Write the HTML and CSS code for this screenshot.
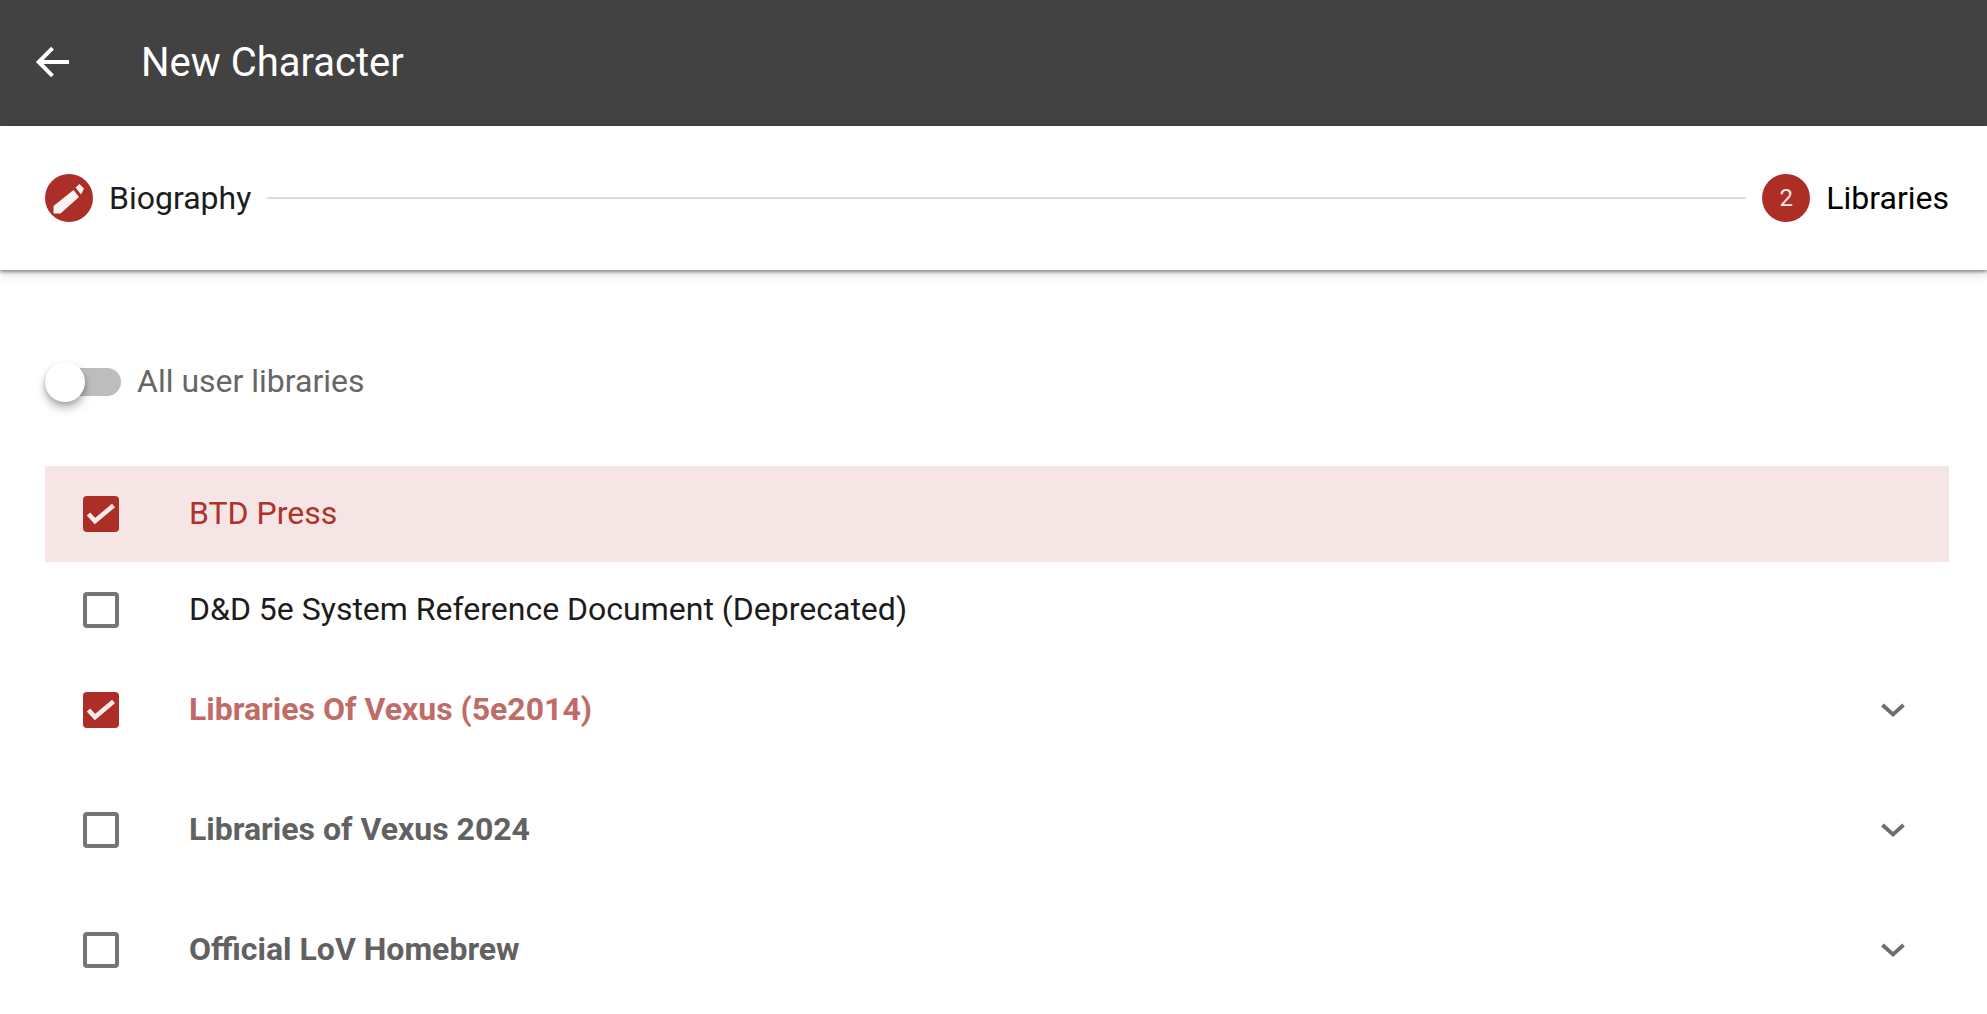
FILE: index.html
```html
<!DOCTYPE html>
<html lang="en">
<head>
<meta charset="utf-8">
<title>New Character</title>
<link rel="stylesheet" href="styles.css">
</head>
<body>
<header class="toolbar">
  <svg class="back" viewBox="0 0 48 48"><path d="M40 24H11M23.500 10.200 9.700 24 23.500 37.800"/></svg>
  <h1 class="title">New Character</h1>
</header>
<nav class="stepper">
  <div class="step">
    <span class="badge"><svg class="pencil" viewBox="0 0 48 48"><path d="M8.500 32 8.500 39.500 15.500 39.500 34 23 28.500 16zM30.500 13.500 34.500 10 39 14.500 36 20.500z"/></svg></span>
    <span class="step-label">Biography</span>
  </div>
  <div class="step-line"></div>
  <div class="step">
    <span class="badge">2</span>
    <span class="step-label step-active">Libraries</span>
  </div>
</nav>
<main class="content">
  <div class="toggle-row">
    <span class="toggle"><span class="thumb"></span></span>
    <span class="toggle-label">All user libraries</span>
  </div>
  <div class="list">
    <div class="row row-selected">
      <span class="box box-on"><svg viewBox="0 0 36 36"><path d="M5.500 18 12 25 30.500 9.500"/></svg></span>
      <span class="name name-red">BTD Press</span>
    </div>
    <div class="row">
      <span class="box"></span>
      <span class="name">D&amp;D 5e System Reference Document (Deprecated)</span>
    </div>
    <div class="panels">
      <div class="row row-panel">
        <span class="box box-on"><svg viewBox="0 0 36 36"><path d="M5.500 18 12 25 30.500 9.500"/></svg></span>
        <span class="name name-bold name-pink">Libraries Of Vexus (5e2014)</span>
        <svg class="chev" viewBox="0 0 24 24"><path d="M1.500 7 12 16.500 22.500 7"/></svg>
      </div>
      <div class="row row-panel">
        <span class="box"></span>
        <span class="name name-bold">Libraries of Vexus 2024</span>
        <svg class="chev" viewBox="0 0 24 24"><path d="M1.500 7 12 16.500 22.500 7"/></svg>
      </div>
      <div class="row row-panel">
        <span class="box"></span>
        <span class="name name-bold">Official LoV Homebrew</span>
        <svg class="chev" viewBox="0 0 24 24"><path d="M1.500 7 12 16.500 22.500 7"/></svg>
      </div>
    </div>
  </div>
</main>
</body>
</html>
```
FILE: styles.css
```css
* { box-sizing: border-box; }
html, body { margin: 0; height: 100%; overflow: hidden; background: #fff; }
body { font-family: Roboto, "Liberation Sans", sans-serif; color: #111; }

.toolbar {
  height: 126px;
  background: #424242;
  display: flex;
  align-items: center;
  padding: 0 0 2px 29px;
  gap: 64px;
}
.back { width: 48px; height: 48px; fill: none; stroke: #fff; stroke-width: 4; }
.title { margin: 0; font-size: 40px; font-weight: 400; color: #fff; }

.stepper {
  height: 144px;
  display: flex;
  align-items: center;
  padding: 0 38px 0 45px;
  box-shadow: 0 2px 3px rgba(0,0,0,.4), 0 4px 10px rgba(0,0,0,.14);
  position: relative;
}
.step { display: flex; align-items: center; gap: 16px; }
.badge {
  width: 48px; height: 48px; border-radius: 50%;
  background: #ad2e26; color: #f8e6e4;
  font-size: 24px;
  display: flex; align-items: center; justify-content: center;
}
.pencil { width: 48px; height: 48px; fill: #f9f4f3; }
.step-label { font-size: 32px; color: #1c1c1c; }
.step-active { color: #000; }
.step-line { flex: 1; height: 2px; background: #dcdcdc; margin: 0 16px; }

.content { padding: 0 38px 0 45px; }
.toggle-row { height: 196px; display: flex; align-items: center; gap: 16px; padding-top: 28px; }
.toggle { width: 76px; height: 28px; border-radius: 14px; background: #bdbdbd; position: relative; }
.thumb {
  position: absolute; left: 0; top: -6px;
  width: 40px; height: 40px; border-radius: 50%;
  background: #fff;
  box-shadow: 0 6px 10px rgba(0,0,0,.28), 0 2px 4px rgba(0,0,0,.14);
}
.toggle-label { font-size: 32px; color: #666; padding-bottom: 2px; }

.row { height: 96px; display: flex; align-items: center; padding-left: 38px; }
.row-selected { background: #f5e5e5; }
.panels { margin-top: -8px; }
.row-panel { height: 120px; padding-right: 44px; }
.box {
  width: 36px; height: 36px; border-radius: 4px;
  border: 4px solid #757575;
  flex: none;
  margin-right: 70px;
}
.box-on { background: #ad2e26; border: 0; }
.box-on svg { display: block; width: 36px; height: 36px; fill: none; stroke: #f8ecea; stroke-width: 4.600; }
.name { font-size: 32px; color: #1c1c1c; flex: 1; padding-bottom: 2px; }
.name-red { color: #ae322a; }
.name-bold { font-weight: 700; color: #616161; }
.name-pink { color: #bf6b68; }
.chev { width: 24px; height: 24px; fill: none; stroke: #6e6e6e; stroke-width: 3.800; flex: none; }
```
